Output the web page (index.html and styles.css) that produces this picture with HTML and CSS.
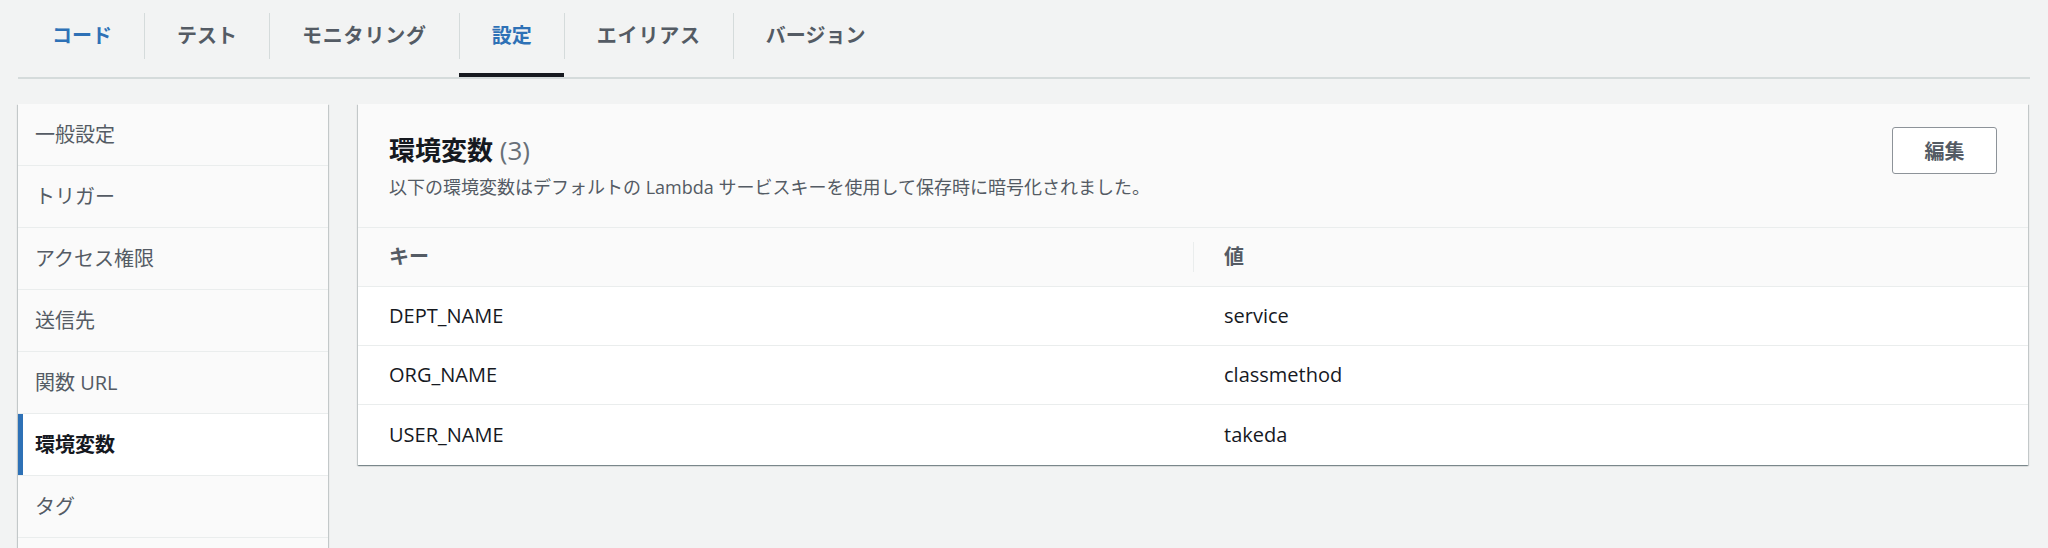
FILE: index.html
```html
<!DOCTYPE html>
<html lang="ja">
  <head>
    <meta charset="UTF-8" />
    <meta name="viewport" content="width=device-width, initial-scale=1.0" />
    <title>環境変数</title>
    <link rel="stylesheet" href="styles.css">
  </head>
  <body>
    <nav class="tabs">
      <a class="tab tab-hover"><span class="tab-label">コード</span></a>
      <a class="tab"><span class="tab-label">テスト</span></a>
      <a class="tab"><span class="tab-label tab-wide">モニタリング</span></a>
      <a class="tab tab-active"><span class="tab-label">設定</span></a>
      <a class="tab"><span class="tab-label tab-wide">エイリアス</span></a>
      <a class="tab"><span class="tab-label">バージョン</span></a>
    </nav>

    <div class="content">
      <aside class="side-nav">
        <a class="side-item">一般設定</a>
        <a class="side-item">トリガー</a>
        <a class="side-item">アクセス権限</a>
        <a class="side-item">送信先</a>
        <a class="side-item">関数 URL</a>
        <a class="side-item side-active">環境変数</a>
        <a class="side-item">タグ</a>
        <a class="side-item"></a>
      </aside>

      <section class="panel">
        <div class="panel-header">
          <div>
            <h2 class="panel-title">環境変数 <span class="count">(3)</span></h2>
            <p class="panel-desc">以下の環境変数はデフォルトの Lambda サービスキーを使用して保存時に暗号化されました。</p>
          </div>
          <button class="btn">編集</button>
        </div>

        <div class="env-table">
          <div class="env-row env-head">
            <div class="cell">キー</div>
            <div class="cell cell-value">値</div>
          </div>
          <div class="env-row">
            <div class="cell">DEPT_NAME</div>
            <div class="cell cell-value">service</div>
          </div>
          <div class="env-row">
            <div class="cell">ORG_NAME</div>
            <div class="cell cell-value">classmethod</div>
          </div>
          <div class="env-row">
            <div class="cell">USER_NAME</div>
            <div class="cell cell-value">takeda</div>
          </div>
        </div>
      </section>
    </div>
  </body>
</html>
```

FILE: styles.css
```css
* {
  box-sizing: border-box;
}

body {
  font-family: "Open Sans", "Noto Sans CJK JP", sans-serif;
  margin: 0;
  height: 548px;
  overflow: hidden;
  background: #f2f3f3;
  color: #16191f;
  font-size: 20px;
}

/* top tabs */
.tabs {
  display: flex;
  margin: 0 18px;
  padding-left: 2px;
  border-bottom: 2px solid #d5dbdb;
}

.tab {
  padding: 13px 0 14px;
  border-bottom: 4px solid transparent;
  font-weight: 700;
  color: #545b64;
  cursor: pointer;
}

.tab-label {
  display: block;
  padding: 0 32px;
  line-height: 46px;
}

.tab-wide {
  letter-spacing: 0.8px;
}

.tab + .tab .tab-label {
  border-left: 1px solid #d5dbdb;
}

.tab-hover,
.tab-active {
  color: #2e71b6;
}

.tab-active {
  border-bottom-color: #16191f;
}

/* layout */
.content {
  display: flex;
  align-items: flex-start;
  gap: 30px;
  margin-top: 25px;
  padding: 0 20px 0 18px;
}

.side-nav,
.panel {
  box-shadow: 0 1px 1px 0 rgba(0, 28, 36, 0.3), 1px 1px 1px 0 rgba(0, 28, 36, 0.15),
    -1px 1px 1px 0 rgba(0, 28, 36, 0.15);
}

/* side navigation */
.side-nav {
  width: 310px;
  flex-shrink: 0;
  background: #fafafa;
}

.side-item {
  display: flex;
  align-items: center;
  height: 62px;
  padding-left: 17px;
  border-bottom: 1px solid #eaeded;
  color: #545b64;
  line-height: 28px;
}

.side-active {
  background: #fff;
  color: #16191f;
  font-weight: 700;
  box-shadow: inset 5px 0 0 #2e71b6;
}

/* main panel */
.panel {
  flex: 1;
  background: #fff;
}

.panel-header {
  display: flex;
  justify-content: space-between;
  align-items: flex-start;
  padding: 23px 31px 27px;
  background: #fafafa;
  border-bottom: 1px solid #eaeded;
}

.panel-title {
  margin: 7px 0 0;
  font-size: 26px;
  line-height: 32px;
  font-weight: 700;
}

.count {
  color: #687078;
  font-weight: 400;
}

.panel-desc {
  margin: 8px 0 0;
  font-size: 18px;
  line-height: 26px;
  color: #545b64;
}

.btn {
  width: 105px;
  height: 47px;
  padding: 0;
  background: #fff;
  border: 1px solid #8d9399;
  border-radius: 3px;
  font-family: inherit;
  font-size: 20px;
  font-weight: 700;
  color: #545b64;
}

/* variables table */
.env-row {
  display: grid;
  grid-template-columns: 1fr 1fr;
  height: 59px;
  border-bottom: 1px solid #eaeded;
}

.env-row:last-child {
  border-bottom: none;
  height: 60px;
}

.env-head {
  background: #fafafa;
  font-weight: 700;
  color: #545b64;
}

.cell {
  display: flex;
  align-items: center;
  padding-left: 31px;
  line-height: 28px;
}

.env-head .cell-value {
  padding-left: 0;
}

.env-head .cell-value::before {
  content: "";
  width: 1px;
  height: 30px;
  margin-right: 30px;
  background: #eaeded;
}
```
